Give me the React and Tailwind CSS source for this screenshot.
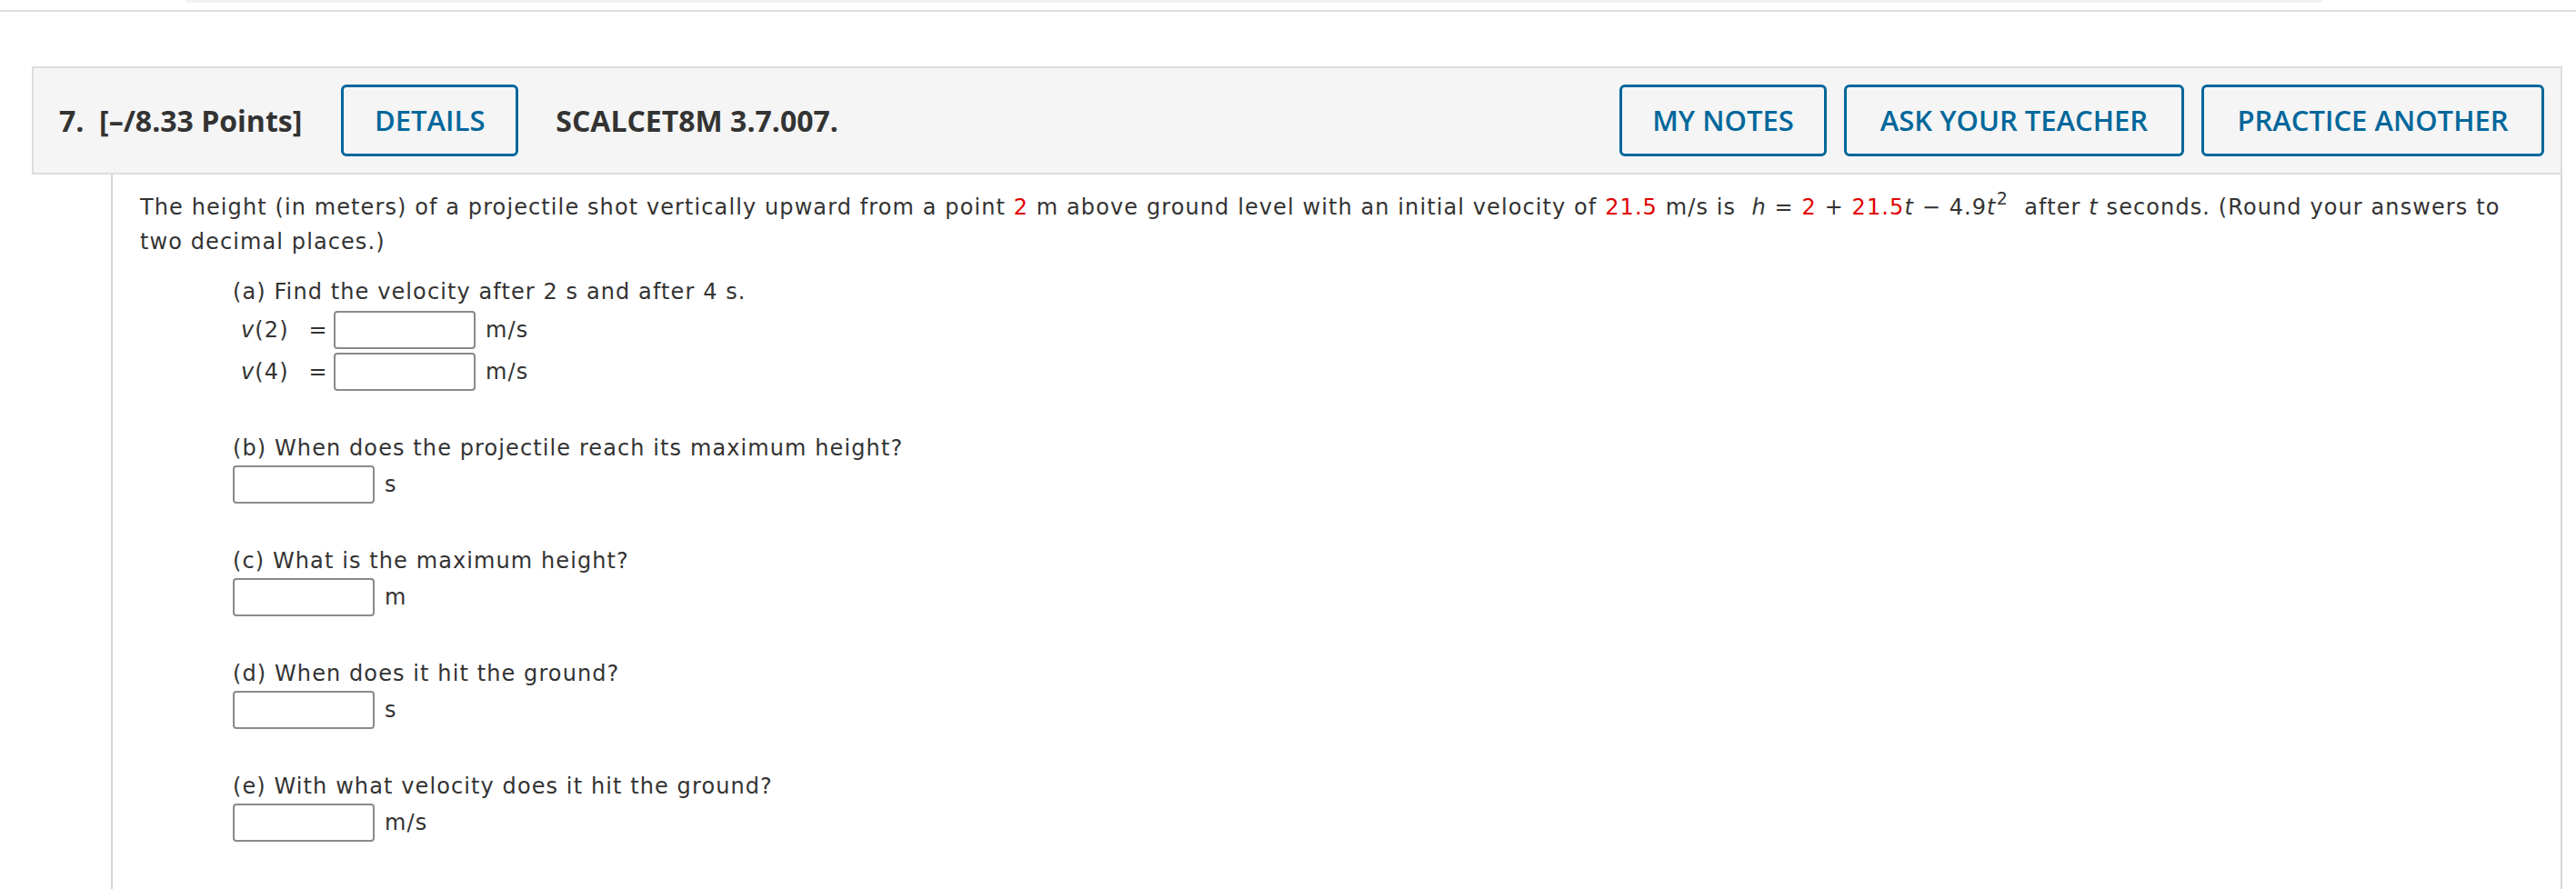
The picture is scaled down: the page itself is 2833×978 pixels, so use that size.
import React from "react";

const BLUE = "border-[#00679b] text-[#00679b]";

function HeaderButton({ children, className = "" }) {
  return (
    <div
      className={`h-[79px] flex items-center justify-center border-[3px] ${BLUE} rounded-[6px] text-[31px] font-semibold ${className}`}
    >
      {children}
    </div>
  );
}

function AnswerBox() {
  return (
    <div className="w-[156px] h-[42px] border-2 border-[#8a8a8a] rounded-[4px] bg-white shrink-0" />
  );
}

function Part({ label, unit }) {
  return (
    <div className="mt-[44px]">
      <div className="leading-[38px]">{label}</div>
      <div className="flex items-center">
        <AnswerBox />
        <span className="ml-[11px]">{unit}</span>
      </div>
    </div>
  );
}

function VRow({ n }) {
  return (
    <div className="flex items-center h-[42px] mt-[4px] first:mt-0">
      <span className="w-[77px] pl-[9px]">
        <i>v</i>(<span>{n}</span>)
      </span>
      <span className="w-[34px] text-center">=</span>
      <AnswerBox />
      <span className="ml-[11px]">m/s</span>
    </div>
  );
}

export default function App() {
  const R = "text-[#e00000]";
  return (
    <div className="w-[2833px] h-[978px] bg-white overflow-hidden font-['Open_Sans',sans-serif]">
      <div className="ml-[204px] w-[2350px] h-[3px] bg-[#f0f1f3] rounded-b-[8px]" />
      <div className="mt-[8px] h-[2px] bg-[#dedede]" />

      <div className="mt-[60px] ml-[35px] w-[2783px] h-[119px] border-2 border-[#dddddd] bg-[#f5f5f5] flex items-center pl-[28px] pr-[18px]">
        <div className="text-[32px] font-bold text-[#333333] whitespace-pre">7.  [–/8.33 Points]</div>
        <HeaderButton className="ml-[43px] w-[195px]">DETAILS</HeaderButton>
        <div className="ml-[41px] text-[32px] font-bold text-[#333333]">SCALCET8M 3.7.007.</div>
        <div className="ml-auto flex gap-[19px]">
          <HeaderButton className="w-[228px]">MY NOTES</HeaderButton>
          <HeaderButton className="w-[374px]">ASK YOUR TEACHER</HeaderButton>
          <HeaderButton className="w-[377px]">PRACTICE ANOTHER</HeaderButton>
        </div>
      </div>

      <div className="ml-[122px] w-[2696px] h-[800px] border-l-2 border-r-2 border-[#d6d6d6] pt-[17px] pl-[30px] pr-[40px] font-['DejaVu_Sans',Verdana,sans-serif] text-[24px] tracking-[1.1px] text-[#333333] leading-[38px]">
        <p>
          The height (in meters) of a projectile shot vertically upward from a point{" "}
          <span className={R}>2</span> m above ground level with an initial velocity of{" "}
          <span className={R}>21.5</span> m/s is&nbsp; <i>h</i> = <span className={R}>2</span> +{" "}
          <span className={R}>21.5</span>
          <i>t</i> − 4.9<i>t</i>
          <sup className="text-[19px] top-[-11px]">2</sup>&nbsp; after <i>t</i> seconds. (Round your answers to two
          decimal places.)
        </p>

        <div className="ml-[102px]">
          <div className="mt-[17px]">
            <div className="leading-[38px]">(a) Find the velocity after 2 s and after 4 s.</div>
            <div className="mt-[2px]">
              <VRow n="2" />
              <VRow n="4" />
            </div>
          </div>
          <Part label="(b) When does the projectile reach its maximum height?" unit="s" />
          <Part label="(c) What is the maximum height?" unit="m" />
          <Part label="(d) When does it hit the ground?" unit="s" />
          <Part label="(e) With what velocity does it hit the ground?" unit="m/s" />
        </div>
      </div>
    </div>
  );
}
